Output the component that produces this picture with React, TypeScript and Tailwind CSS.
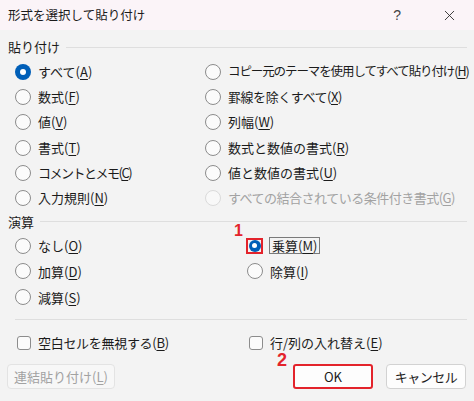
import React from 'react';
import { X } from 'lucide-react';

type Opt = {
	text: string;
	key: string;
	checked?: boolean;
	disabled?: boolean;
	marked?: boolean;
	track?: string;
};

const PASTE_LEFT: Opt[] = [
	{ text: 'すべて', key: 'A', checked: true },
	{ text: '数式', key: 'F' },
	{ text: '値', key: 'V' },
	{ text: '書式', key: 'T' },
	{ text: 'コメントとメモ', key: 'C', track: 'tracking-[-1.5px]' },
	{ text: '入力規則', key: 'N' },
];

const PASTE_RIGHT: Opt[] = [
	{ text: 'コピー元のテーマを使用してすべて貼り付け', key: 'H', track: 'text-[12.5px] tracking-[-1.1px]' },
	{ text: '罫線を除くすべて', key: 'X', track: 'tracking-[-0.45px]' },
	{ text: '列幅', key: 'W' },
	{ text: '数式と数値の書式', key: 'R' },
	{ text: '値と数値の書式', key: 'U' },
	{ text: 'すべての結合されている条件付き書式', key: 'G', disabled: true, track: 'tracking-[-0.5px]' },
];

const OP_LEFT: Opt[] = [
	{ text: 'なし', key: 'O' },
	{ text: '加算', key: 'D' },
	{ text: '減算', key: 'S' },
];

const OP_RIGHT: Opt[] = [
	{ text: '乗算', key: 'M', checked: true, marked: true },
	{ text: '除算', key: 'I' },
];

function Label({ text, k }: { text: string; k: string }) {
	return (
		<>
			{text}(<span className="underline underline-offset-2">{k}</span>)
		</>
	);
}

function Radio({ checked, disabled }: { checked?: boolean; disabled?: boolean }) {
	if (checked) {
		return (
			<span className="w-4 h-4 shrink-0 rounded-full bg-[#005fb8] flex items-center justify-center">
				<span className="w-[6px] h-[6px] rounded-full bg-white" />
			</span>
		);
	}
	return (
		<span
			className={`w-4 h-4 shrink-0 rounded-full border ${
				disabled ? 'border-[#dadada] bg-[#f8f8f8]' : 'border-[#8c8c8c] bg-[#fbfbfb]'
			}`}
		/>
	);
}

function RadioRow({ opt, h }: { opt: Opt; h: string }) {
	return (
		<div className={`flex items-center ${h}`}>
			{opt.marked ? (
				<span className="w-[17px] h-[16px] -ml-[1px] border-2 border-[#e3232b] flex items-center justify-center">
					<span className="w-[12px] h-[12px] rounded-full bg-[#005fb8] flex items-center justify-center">
						<span className="w-[5px] h-[5px] rounded-full bg-white" />
					</span>
				</span>
			) : (
				<Radio checked={opt.checked} disabled={opt.disabled} />
			)}
			<span
				className={`ml-[6px] whitespace-nowrap ${opt.track ?? ''} ${
					opt.disabled ? 'text-[#a2a2a2]' : 'text-[#1b1b1b]'
				} ${opt.marked ? 'border border-[#7a7a7a] px-[2px] leading-[15px]' : 'pl-[1px]'}`}
			>
				<Label text={opt.text} k={opt.key} />
			</span>
		</div>
	);
}

function SectionHeader({ title, h }: { title: string; h: string }) {
	return (
		<div className={`flex items-center ${h}`}>
			<span className="text-[#1b1b1b]">{title}</span>
			<div className="flex-1 ml-[6px] border-t border-[#dedede]" />
		</div>
	);
}

function Checkbox({ text, k, track }: { text: string; k: string; track?: string }) {
	return (
		<div className="flex items-center h-[24px]">
			<span className="w-[14px] h-[14px] rounded-[3px] border border-[#8c8c8c] bg-[#fbfbfb]" />
			<span className={`ml-[7px] text-[#1b1b1b] ${track ?? ''}`}>
				<Label text={text} k={k} />
			</span>
		</div>
	);
}

export default function App() {
	return (
		<div
			className="relative w-[474px] h-[401px] bg-[#f3f3f3] text-[13px] overflow-hidden"
			style={{ fontFamily: '"Noto Sans CJK JP", "Noto Sans", sans-serif' }}
		>
			{/* Title bar */}
			<div className="h-[30px] bg-[#fbf4f8] flex items-center pl-[8px] pr-[16px]">
				<span className="text-[12.5px] text-[#1b1b1b]">形式を選択して貼り付け</span>
				<span
					className="ml-auto mr-[40px] text-[14px] text-[#444]"
					style={{ fontFamily: '"Liberation Sans", sans-serif' }}
				>
					?
				</span>
				<X size={17} strokeWidth={1.2} className="text-[#222]" />
			</div>

			<div className="pl-[8px] pr-[7px] pt-[5px]">
				<SectionHeader title="貼り付け" h="h-[24px]" />
				<div className="grid grid-cols-[190px_1fr] pl-[7px]">
					<div className="flex flex-col">
						{PASTE_LEFT.map((o) => (
							<RadioRow key={o.key} opt={o} h="h-[25.3px]" />
						))}
					</div>
					<div className="flex flex-col">
						{PASTE_RIGHT.map((o) => (
							<RadioRow key={o.key} opt={o} h="h-[25.3px]" />
						))}
					</div>
				</div>

				<SectionHeader title="演算" h="h-[22px]" />
				<div className="grid grid-cols-[232px_1fr] pl-[7px]">
					<div className="flex flex-col">
						{OP_LEFT.map((o) => (
							<RadioRow key={o.key} opt={o} h="h-[25.8px]" />
						))}
					</div>
					<div className="flex flex-col">
						{OP_RIGHT.map((o) => (
							<RadioRow key={o.key} opt={o} h="h-[25.8px]" />
						))}
					</div>
				</div>

				<div className="mt-[9px] ml-[7px] border-t border-[#dedede]" />

				<div className="mt-[11px] grid grid-cols-[232px_1fr] pl-[9px]">
					<Checkbox text="空白セルを無視する" k="B" track="tracking-[-0.3px]" />
					<Checkbox text="行/列の入れ替え" k="E" />
				</div>

				<div className="mt-[9px] flex items-center -ml-[1px]">
					<button className="w-[108px] h-[25px] rounded-[4px] border border-[#e3e3e3] bg-[#f7f7f7] text-[#a2a2a2]">
						<Label text="連結貼り付け" k="L" />
					</button>
					<button className="ml-auto w-[80px] h-[25px] rounded-[3px] border-2 border-[#e3232b] bg-[#fdfdfd] text-[#1b1b1b]">
						OK
					</button>
					<button className="ml-[13px] mr-[1px] w-[80px] h-[25px] rounded-[4px] border border-[#d2d2d2] bg-[#fdfdfd] text-[#1b1b1b] tracking-[-0.5px]">
						キャンセル
					</button>
				</div>
			</div>

			{/* Red step annotations */}
			<span
				className="absolute left-[234px] top-[223px] text-[16px] font-bold text-[#e3232b] leading-none"
				style={{ fontFamily: '"Liberation Sans", sans-serif' }}
			>
				1
			</span>
			<span
				className="absolute left-[277px] top-[351px] text-[18px] font-bold text-[#e3232b] leading-none"
				style={{ fontFamily: '"Liberation Sans", sans-serif' }}
			>
				2
			</span>
		</div>
	);
}
